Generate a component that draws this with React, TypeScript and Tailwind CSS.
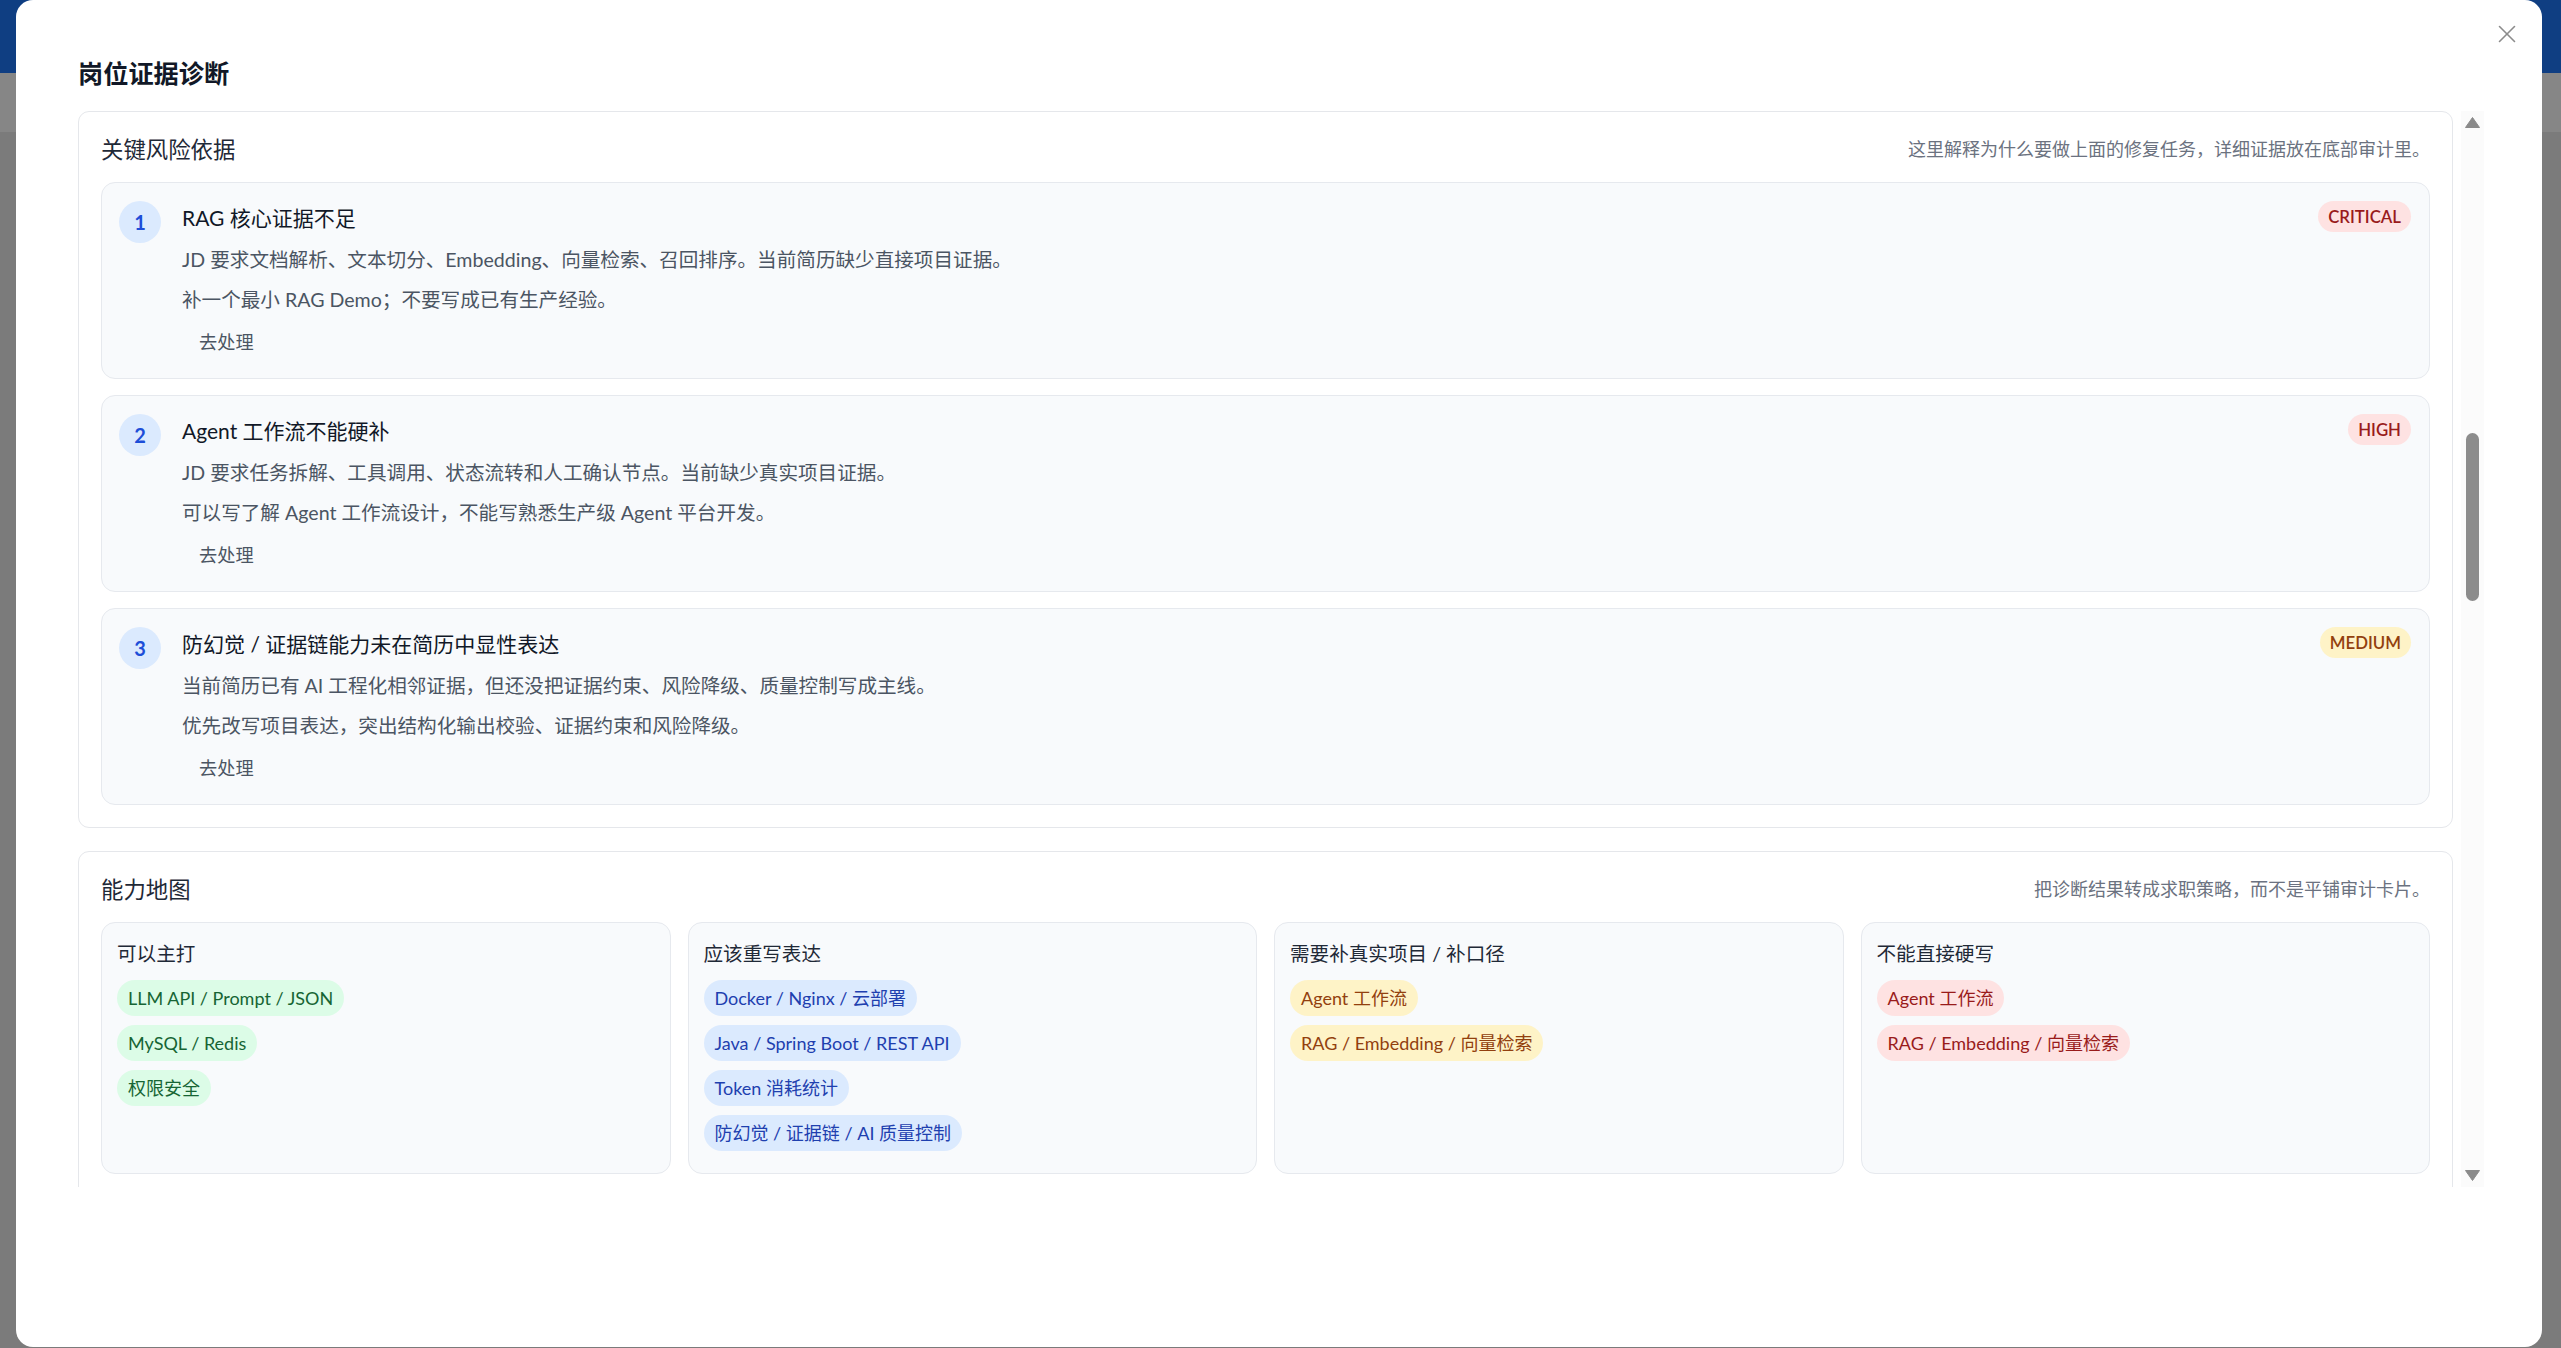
import { X } from "lucide-react";

type Risk = { n: number; title: string; lines: string[]; level: string };
type Column = { title: string; tone: string; tags: string[] };

const risks: Risk[] = [
  {
    n: 1,
    title: "RAG 核心证据不足",
    lines: [
      "JD 要求文档解析、文本切分、Embedding、向量检索、召回排序。当前简历缺少直接项目证据。",
      "补一个最小 RAG Demo；不要写成已有生产经验。",
    ],
    level: "CRITICAL",
  },
  {
    n: 2,
    title: "Agent 工作流不能硬补",
    lines: [
      "JD 要求任务拆解、工具调用、状态流转和人工确认节点。当前缺少真实项目证据。",
      "可以写了解 Agent 工作流设计，不能写熟悉生产级 Agent 平台开发。",
    ],
    level: "HIGH",
  },
  {
    n: 3,
    title: "防幻觉 / 证据链能力未在简历中显性表达",
    lines: [
      "当前简历已有 AI 工程化相邻证据，但还没把证据约束、风险降级、质量控制写成主线。",
      "优先改写项目表达，突出结构化输出校验、证据约束和风险降级。",
    ],
    level: "MEDIUM",
  },
];

const columns: Column[] = [
  { title: "可以主打", tone: "green", tags: ["LLM API / Prompt / JSON", "MySQL / Redis", "权限安全"] },
  {
    title: "应该重写表达",
    tone: "blue",
    tags: ["Docker / Nginx / 云部署", "Java / Spring Boot / REST API", "Token 消耗统计", "防幻觉 / 证据链 / AI 质量控制"],
  },
  { title: "需要补真实项目 / 补口径", tone: "amber", tags: ["Agent 工作流", "RAG / Embedding / 向量检索"] },
  { title: "不能直接硬写", tone: "red", tags: ["Agent 工作流", "RAG / Embedding / 向量检索"] },
];

const toneClass: Record<string, string> = {
  green: "bg-[#dcfce7] text-[#166534]",
  blue: "bg-[#dbeafe] text-[#1e40af]",
  amber: "bg-[#fef3c7] text-[#92400e]",
  red: "bg-[#fee2e2] text-[#991b1b]",
};

const levelClass: Record<string, string> = {
  CRITICAL: "bg-[#fee2e2] text-[#991b1b]",
  HIGH: "bg-[#fee2e2] text-[#991b1b]",
  MEDIUM: "bg-[#fef3c7] text-[#92400e]",
};

const Arrow = ({ down }: { down?: boolean }) => (
  <svg width="15" height="11" viewBox="0 0 15 11" className={down ? "rotate-180" : ""}>
    <path d="M7.5 0.5 L14.5 10.5 H0.5 Z" fill="#8a8a8a" strokeLinejoin="round" stroke="#8a8a8a" />
  </svg>
);

const RiskCard = ({ risk }: { risk: Risk }) => (
  <div className="flex gap-[21px] rounded-[14px] border border-[#e6e9ee] bg-[#f8fafc] pb-[17px] pl-[17px] pr-[18px] pt-[18px]">
    <div className="flex h-[42px] w-[42px] shrink-0 items-center justify-center rounded-full bg-[#dbeafe] text-[20px] font-bold text-[#1d4ed8]">
      {risk.n}
    </div>
    <div className="flex flex-1 flex-col items-start">
      <div className="text-[21px] leading-[33px] text-[#111827]">{risk.title}</div>
      {risk.lines.map((line, i) => (
        <p key={i} className="mt-[11px] text-[19.6px] leading-[29px] text-[#4b5563]">
          {line}
        </p>
      ))}
      <button className="mt-[10px] px-[17px] py-[5px] text-[18.2px] leading-[27px] text-[#4b5563]">去处理</button>
    </div>
    <span
      className={`inline-flex h-[31px] shrink-0 items-center rounded-full px-[10px] text-[16.8px] font-semibold ${levelClass[risk.level]}`}
    >
      {risk.level}
    </span>
  </div>
);

const SectionHead = ({ title, note }: { title: string; note: string }) => (
  <div className="flex items-center justify-between">
    <h3 className="text-[22.4px] leading-[31px] text-[#1f2937]">{title}</h3>
    <span className="text-[18px] text-[#6b7280]">{note}</span>
  </div>
);

export default function App() {
  return (
    <div className="relative h-[1348px] w-full overflow-hidden bg-[#7b7b7b] font-['Lato','Noto_Sans_CJK_SC',sans-serif]">
      <div className="h-[73px] bg-[#0f3e82]" />
      <div className="h-[59px] bg-[#868686]" />

      <div className="absolute left-[16px] top-0 flex h-[1347px] w-[2526px] flex-col rounded-[17px] bg-white pl-[62px] pr-[58px]">
        <button className="absolute right-[20px] top-[19px] text-[#8c8c8c]">
          <X size={30} strokeWidth={1.3} />
        </button>

        <h2 className="pt-[56px] text-[25.2px] font-bold leading-[35px] text-[#111827]">岗位证据诊断</h2>

        <div className="mt-[20px] flex h-[1076px] gap-[8px]">
          <div className="flex flex-1 flex-col gap-[23px] overflow-hidden">
            <section className="rounded-[11px] border border-[#e5e7eb] bg-white p-[22px]">
              <SectionHead title="关键风险依据" note="这里解释为什么要做上面的修复任务，详细证据放在底部审计里。" />
              <div className="mt-[17px] flex flex-col gap-[16px]">
                {risks.map((r) => (
                  <RiskCard key={r.n} risk={r} />
                ))}
              </div>
            </section>

            <section className="shrink-0 rounded-[11px] border border-[#e5e7eb] bg-white p-[22px]">
              <SectionHead title="能力地图" note="把诊断结果转成求职策略，而不是平铺审计卡片。" />
              <div className="mt-[17px] grid grid-cols-4 gap-[17px]">
                {columns.map((col) => (
                  <div
                    key={col.title}
                    className="rounded-[14px] border border-[#e6e9ee] bg-[#f8fafc] px-[15px] pb-[22px] pt-[17px]"
                  >
                    <div className="text-[19.6px] leading-[28px] text-[#1f2937]">{col.title}</div>
                    <div className="mt-[12px] flex flex-col items-start gap-[9px]">
                      {col.tags.map((t) => (
                        <span
                          key={t}
                          className={`inline-flex h-[36px] items-center rounded-full px-[11px] text-[18px] ${toneClass[col.tone]}`}
                        >
                          {t}
                        </span>
                      ))}
                    </div>
                  </div>
                ))}
              </div>
              <div className="h-[300px]" />
            </section>
          </div>

          <div className="flex w-[23px] flex-col items-center bg-[#fbfbfb] pb-[6px] pt-[6px]">
            <Arrow />
            <div className="mt-[305px] h-[168px] w-[13px] rounded-full bg-[#8c8c8c]" />
            <div className="flex-1" />
            <Arrow down />
          </div>
        </div>
      </div>
    </div>
  );
}
